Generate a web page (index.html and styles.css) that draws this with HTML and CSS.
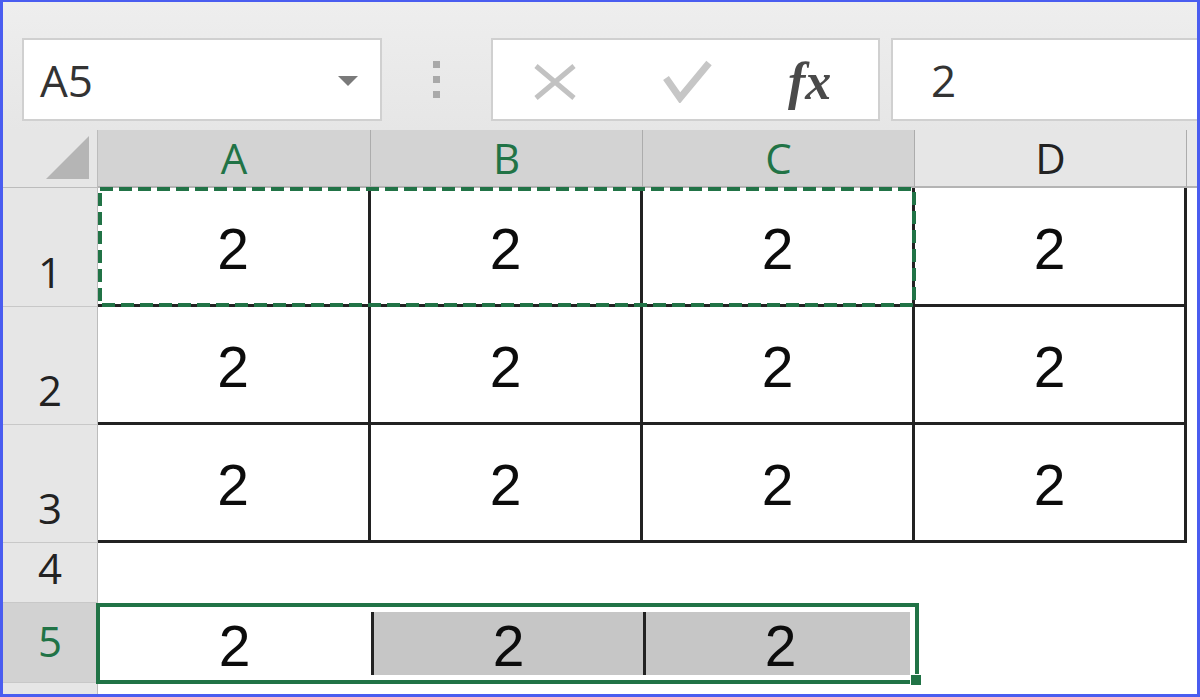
FILE: index.html
```html
<!DOCTYPE html>
<html>
<head>
<meta charset="utf-8">
<link rel="stylesheet" href="styles.css">
</head>
<body>
<div class="frame">
  <div class="toolbar">
    <div class="namebox">
      <span class="nb-text">A5</span>
      <svg class="nb-arrow" width="20" height="10" viewBox="0 0 20 10"><polygon points="0,0 20,0 10,10" fill="#7a7a7a"/></svg>
    </div>
    <div class="sep"><i></i><i></i><i></i></div>
    <div class="fbtns">
      <svg class="ic-x" width="44" height="38" viewBox="0 0 44 38"><path d="M3 3 L41 35 M41 3 L3 35" stroke="#c2c2c2" stroke-width="5" fill="none"/></svg>
      <svg class="ic-check" width="50" height="44" viewBox="0 0 50 44"><polyline points="4,19 18,39 47,4" stroke="#c6c6c6" stroke-width="7" fill="none" stroke-linejoin="miter"/></svg>
      <span class="fx">fx</span>
    </div>
    <div class="finput">2</div>
  </div>
  <div class="sheet">
    <div class="corner"><svg width="44" height="44" viewBox="0 0 44 44"><polygon points="43,0 43,43 0,43" fill="#b5b5b5"/></svg></div>
    <div class="ch on">A</div>
    <div class="ch on">B</div>
    <div class="ch on">C</div>
    <div class="ch">D</div>
    <div class="ch end"></div>

    <div class="rh">1</div>
    <div class="c bx">2</div>
    <div class="c bx">2</div>
    <div class="c bx">2</div>
    <div class="c bx">2</div>
    <div class="c"></div>

    <div class="rh">2</div>
    <div class="c bx">2</div>
    <div class="c bx">2</div>
    <div class="c bx">2</div>
    <div class="c bx">2</div>
    <div class="c"></div>

    <div class="rh">3</div>
    <div class="c bx">2</div>
    <div class="c bx">2</div>
    <div class="c bx">2</div>
    <div class="c bx">2</div>
    <div class="c"></div>

    <div class="rh">4</div>
    <div class="c"></div>
    <div class="c"></div>
    <div class="c"></div>
    <div class="c"></div>
    <div class="c"></div>

    <div class="rh on r5">5</div>
    <div class="c">2</div>
    <div class="c gs">2</div>
    <div class="c gs">2</div>
    <div class="c"></div>
    <div class="c"></div>

    <div class="rh"></div>
    <div class="c"></div>
    <div class="c"></div>
    <div class="c"></div>
    <div class="c"></div>
    <div class="c"></div>

    <svg class="ants" width="818" height="120" viewBox="0 0 818 120"><rect x="2" y="2" width="814" height="116" fill="none" stroke="#217346" stroke-width="4" stroke-dasharray="13 6"/></svg>
    <div class="sel"><div class="handle"></div></div>
  </div>
</div>
</body>
</html>
```
FILE: styles.css
```css
html, body {
  margin: 0;
  padding: 0;
  background: #ffffff;
}

.frame {
  width: 1200px;
  height: 697px;
  box-sizing: border-box;
  border-style: solid;
  border-color: #4a5df0;
  border-width: 2px 3px 3px 3px;
  overflow: hidden;
  display: flex;
  flex-direction: column;
  font-family: "Open Sans", "Noto Sans", sans-serif;
}

/* ---------- toolbar ---------- */
.toolbar {
  height: 128px;
  flex: none;
  box-sizing: border-box;
  padding: 36px 0 0 19px;
  display: flex;
  align-items: flex-start;
  background: linear-gradient(#eeeeee, #e6e6e6);
}

.namebox,
.fbtns,
.finput {
  height: 83px;
  box-sizing: border-box;
  background: #ffffff;
  border: 2px solid #d0d0d0;
  display: flex;
  align-items: center;
}

.namebox {
  width: 360px;
  padding: 0 22px 0 16px;
  justify-content: space-between;
}

.nb-text {
  font-size: 44px;
  color: #333333;
  line-height: 1;
}

.nb-arrow {
  margin-top: 2px;
}

.sep {
  width: 109px;
  height: 83px;
  display: flex;
  flex-direction: column;
  align-items: center;
  justify-content: center;
  gap: 8px;
}

.sep i {
  display: block;
  width: 7px;
  height: 7px;
  background: #a9a9a9;
}

.fbtns {
  width: 389px;
  padding-left: 40px;
}

.ic-x {
  margin-top: 4px;
}

.ic-check {
  margin-left: 85px;
  margin-top: 2px;
}

.fx {
  margin-left: 76px;
  font-family: "Liberation Serif", "DejaVu Serif", serif;
  font-style: italic;
  font-weight: bold;
  font-size: 52px;
  color: #4a4a4a;
  line-height: 1;
  margin-top: 4px;
}

.finput {
  flex: 1;
  margin-left: 11px;
  margin-right: -12px;
  padding-left: 38px;
  font-size: 44px;
  color: #333333;
}

/* ---------- sheet ---------- */
.sheet {
  flex: 1;
  position: relative;
  display: grid;
  grid-template-columns: 95px 273px 272px 272px 272px 1fr;
  grid-template-rows: 58px 119px 118px 118px 60px 80px 1fr;
  background: #ffffff;
}

.corner {
  background: #e6e6e6;
  border-right: 1px solid #bcbcbc;
  border-bottom: 1px solid #bcbcbc;
  box-sizing: border-box;
  display: flex;
  align-items: flex-end;
  justify-content: flex-end;
  padding: 0 7px 7px 0;
}

.ch {
  background: #e6e6e6;
  border-right: 1px solid #acacac;
  border-bottom: 2px solid #b4b4b4;
  box-sizing: border-box;
  display: flex;
  align-items: center;
  justify-content: center;
  font-size: 42px;
  color: #222222;
  line-height: 1;
}

.ch.on {
  background: #d3d3d3;
  color: #217346;
}

.ch.end {
  background: #e9e9e9;
  border-right: none;
}

.rh {
  background: #e6e6e6;
  border-right: 1px solid #bcbcbc;
  border-bottom: 1px solid #c8c8c8;
  box-sizing: border-box;
  display: flex;
  align-items: flex-end;
  justify-content: center;
  padding-bottom: 13px;
  font-size: 42px;
  color: #222222;
  line-height: 1;
}

.rh.on {
  background: #d2d2d2;
  color: #217346;
}

.rh.r5 {
  padding-bottom: 20px;
}

.c {
  box-sizing: border-box;
  display: flex;
  align-items: center;
  justify-content: center;
  padding-top: 6px;
  font-family: "Liberation Sans", Arial, sans-serif;
  font-size: 57px;
  color: #0c0c0c;
  line-height: 1;
}

.c.bx {
  border-right: 3px solid #222222;
  border-bottom: 3px solid #222222;
}

.c.gs {
  background: #c6c6c6;
  border-left: 3px solid #222222;
}

.ants {
  position: absolute;
  left: 95px;
  top: 57px;
}

.sel {
  position: absolute;
  left: 93px;
  top: 473px;
  width: 823px;
  height: 81px;
  box-sizing: border-box;
  border: 4px solid #217346;
  box-shadow: inset 0 0 0 5px #ffffff;
}

.handle {
  position: absolute;
  right: -7px;
  bottom: -6px;
  width: 10px;
  height: 10px;
  background: #217346;
  border: 1px solid #ffffff;
}
```
